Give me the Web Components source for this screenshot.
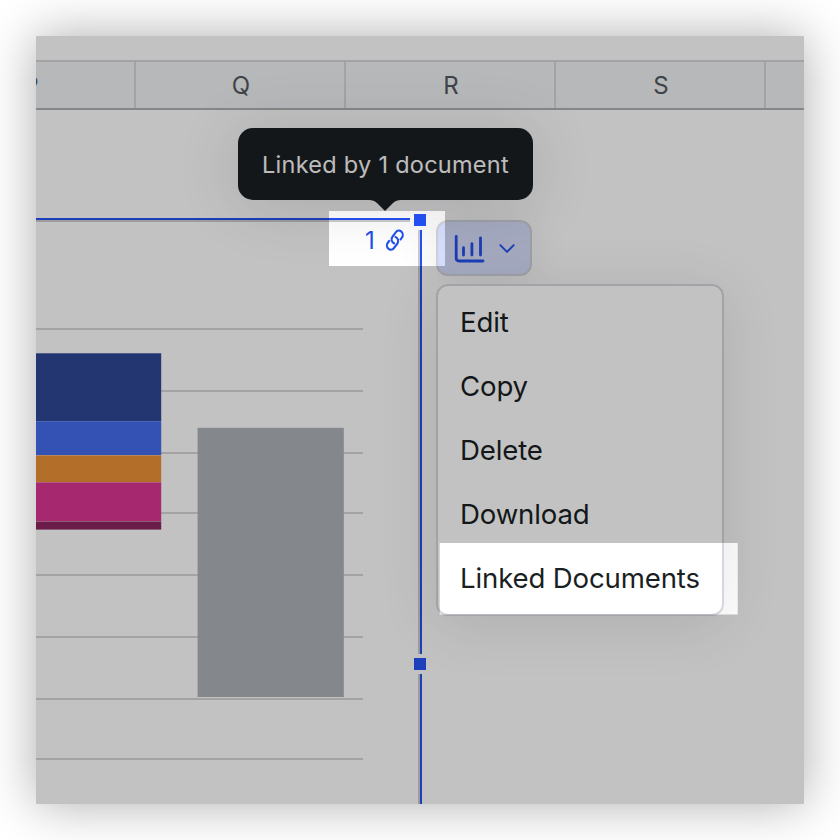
<!DOCTYPE html>
<html lang="en">
<head>
<meta charset="utf-8">
<title>Linked Documents</title>
<style>
  body {
    background: #fff;
    font-family: Inter, "Liberation Sans", sans-serif;
    margin: 0;
  }
</style>
</head>
<body>
<sheet-window>
  <column-header slot="header" columns="P,Q,R,S,"></column-header>
  <bar-chart slot="sheet"></bar-chart>
  <selection-frame slot="over"></selection-frame>
  <chart-button slot="over"></chart-button>
  <drop-menu slot="over">
    <menu-item>Edit</menu-item>
    <menu-item>Copy</menu-item>
    <menu-item>Delete</menu-item>
    <menu-item>Download</menu-item>
    <menu-item>Linked Documents</menu-item>
  </drop-menu>
  <link-badge slot="over">1</link-badge>
  <tool-tip slot="over">Linked by 1 document</tool-tip>
  <spot-light slot="over"></spot-light>
</sheet-window>

<script>
// attach an open shadow root holding the given markup
function render(el, html) {
  el.attachShadow({ mode: 'open' }).innerHTML = html
}

class SheetWindow extends HTMLElement {
  constructor() {
    super()
    render(this, `
      <style>
        :host {
          box-shadow: 0 0 48px rgba(0, 0, 0, 0.33);
          display: block;
          height: 768px;
          margin: 36px;
          width: 768px;
        }
        .sheet {
          background: #fff;
          display: grid;
          grid-template-rows: 24px 50px 1fr;
          height: 100%;
          overflow: hidden;
          position: relative;
        }
      </style>
      <div class="sheet">
        <div></div>
        <slot name="header"></slot>
        <slot name="sheet"></slot>
        <slot name="over"></slot>
      </div>
    `)
  }
}

class ColumnHeader extends HTMLElement {
  constructor() {
    super()
    render(this, `
      <style>
        :host {
          background: #f0f2f4;
          border-bottom: 2px solid #afb2b6;
          border-top: 2px solid #d7d7db;
          box-sizing: border-box;
          display: block;
          overflow: hidden;
        }
        .row {
          display: grid;
          grid-template-columns: repeat(5, 210px);
          height: 46px;
          margin-left: -110px;
        }
        .row span {
          border-right: 2px solid #d7d7db;
          color: #545861;
          font-size: 24px;
          line-height: 48px;
          padding-left: 2px;
          text-align: center;
        }
      </style>
      <div class="row"></div>
    `)
  }

  connectedCallback() {
    const row = this.shadowRoot.querySelector('.row')
    this.getAttribute('columns').split(',').forEach((name) => {
      const cell = document.createElement('span')
      cell.textContent = name
      row.appendChild(cell)
    })
  }
}

class BarChart extends HTMLElement {
  constructor() {
    super()
    const lines = [218, 280, 342, 402, 464, 526, 588, 648]
      .map((y) => `<rect y="${y}" width="327" height="2" fill="#d6d6d6"/>`)
      .join('')
    render(this, `
      <style>
        :host { display: block; }
        svg { display: block; }
      </style>
      <svg width="384" height="694">
        ${lines}
        <rect y="243.3" width="125.2" height="67.7" fill="#2e4896"/>
        <rect y="311" width="125.2" height="34.2" fill="#446ced"/>
        <rect y="345.2" width="125.2" height="27" fill="#eb9138"/>
        <rect y="372.2" width="125.2" height="39.2" fill="#da3792"/>
        <rect y="411.4" width="125.2" height="8.2" fill="#8d265f"/>
        <path d="M0 311.5h125M0 345.5h125M0 372.5h125M0 411.5h125" stroke="#fff" stroke-opacity=".18"/>
        <rect x="161.6" y="317.8" width="146.2" height="269.2" fill="#aeb2b7"/>
      </svg>
    `)
  }
}

class SelectionFrame extends HTMLElement {
  constructor() {
    super()
    render(this, `
      <style>
        :host {
          inset: 0;
          position: absolute;
        }
        svg { display: block; }
      </style>
      <svg width="768" height="768">
        <path d="M0 185h374M383 194v424M383 638v130" stroke="#cdcdcd" stroke-width="2"/>
        <path d="M0 183h374M385 194v424M385 638v130" stroke="#2552f5" stroke-width="2"/>
        <path d="M378 178h12v12h-12zM378 622h12v12h-12z" fill="#2654fa"/>
      </svg>
    `)
  }
}

class ChartButton extends HTMLElement {
  constructor() {
    super()
    render(this, `
      <style>
        :host {
          background: #d8dffc;
          border: 2px solid #d0d2db;
          border-radius: 12px;
          box-shadow: 0 4px 40px rgba(20, 20, 40, 0.08);
          box-sizing: border-box;
          height: 56px;
          left: 400px;
          position: absolute;
          top: 184px;
          width: 96px;
        }
        svg {
          display: block;
          fill: none;
          stroke: #2552ee;
          stroke-linecap: round;
          stroke-linejoin: round;
        }
      </style>
      <svg width="92" height="52" viewBox="438 222 92 52">
        <path d="M456.2 236.5v21.5q0 3 3 3h23.8M463.5 247.7v7.3M471.9 243.6v11.4M480.5 238v17" stroke-width="2.8"/>
        <path d="M500.3 245.2l6.7 6.7 6.7-6.7" stroke-width="1.9"/>
      </svg>
    `)
  }
}

class DropMenu extends HTMLElement {
  constructor() {
    super()
    render(this, `
      <style>
        :host {
          background: #fff;
          border: 2px solid #d5d6de;
          border-radius: 12px;
          box-shadow: 0 8px 60px rgba(20, 20, 40, 0.11);
          box-sizing: border-box;
          display: flex;
          flex-direction: column;
          left: 400px;
          padding: 4px 0;
          position: absolute;
          top: 248px;
          width: 288px;
        }
      </style>
      <slot></slot>
    `)
  }
}

class MenuItem extends HTMLElement {
  constructor() {
    super()
    render(this, `
      <style>
        :host {
          color: #1a1f24;
          display: block;
          font-size: 27.6px;
          height: 64px;
          letter-spacing: -0.15px;
          line-height: 65px;
          padding-left: 22px;
          white-space: nowrap;
        }
      </style>
      <slot></slot>
    `)
  }
}

class LinkBadge extends HTMLElement {
  constructor() {
    super()
    render(this, `
      <style>
        :host {
          align-items: center;
          color: #2050ee;
          display: flex;
          font-size: 24px;
          gap: 8px;
          height: 29px;
          left: 329px;
          position: absolute;
          top: 190px;
        }
        svg {
          fill: none;
          stroke: currentColor;
          stroke-linecap: round;
          stroke-width: 2.4;
        }
      </style>
      <slot></slot>
      <svg width="24" height="24" viewBox="0 0 24 24">
        <g transform="rotate(-5 12 12) translate(1.6 -.1) scale(.86 .94)">
          <path d="M13.19 8.688a4.5 4.5 0 0 1 1.242 7.244l-4.5 4.5a4.5 4.5 0 0 1-6.364-6.364l1.757-1.757m13.35-.622 1.757-1.757a4.5 4.5 0 0 0-6.364-6.364l-4.5 4.5a4.5 4.5 0 0 0 1.242 7.244"/>
        </g>
      </svg>
    `)
  }
}

class ToolTip extends HTMLElement {
  constructor() {
    super()
    render(this, `
      <style>
        :host {
          background: #1a1f23;
          border-radius: 15px;
          box-shadow: 0 4px 64px rgba(20, 20, 40, 0.14);
          color: #f8f8f8;
          font-size: 23.5px;
          height: 72px;
          left: 202px;
          letter-spacing: 0.27px;
          line-height: 74px;
          position: absolute;
          text-align: center;
          top: 92px;
          white-space: nowrap;
          width: 295px;
        }
        svg {
          display: block;
          fill: #1a1f23;
          left: 131px;
          position: absolute;
          top: 71px;
        }
      </style>
      <slot></slot>
      <svg width="32" height="13"><path d="M0 0v1q5 0 8 3l8 8 8-8q3-3 8-3V0z"/></svg>
    `)
  }
}

// dims the whole sheet except for the link badge and the last menu row
class SpotLight extends HTMLElement {
  constructor() {
    super()
    render(this, `
      <style>
        :host {
          inset: 0;
          pointer-events: none;
          position: absolute;
        }
        svg { display: block; }
      </style>
      <svg width="768" height="768">
        <path fill="#000" fill-opacity=".24" fill-rule="evenodd"
          d="M0 0h768v768H0z M293 175h116v55H293z M403.7 507h298v71.5h-298z"/>
      </svg>
    `)
  }
}

customElements.define('sheet-window', SheetWindow)
customElements.define('column-header', ColumnHeader)
customElements.define('bar-chart', BarChart)
customElements.define('selection-frame', SelectionFrame)
customElements.define('chart-button', ChartButton)
customElements.define('drop-menu', DropMenu)
customElements.define('menu-item', MenuItem)
customElements.define('link-badge', LinkBadge)
customElements.define('tool-tip', ToolTip)
customElements.define('spot-light', SpotLight)
</script>
</body>
</html>
